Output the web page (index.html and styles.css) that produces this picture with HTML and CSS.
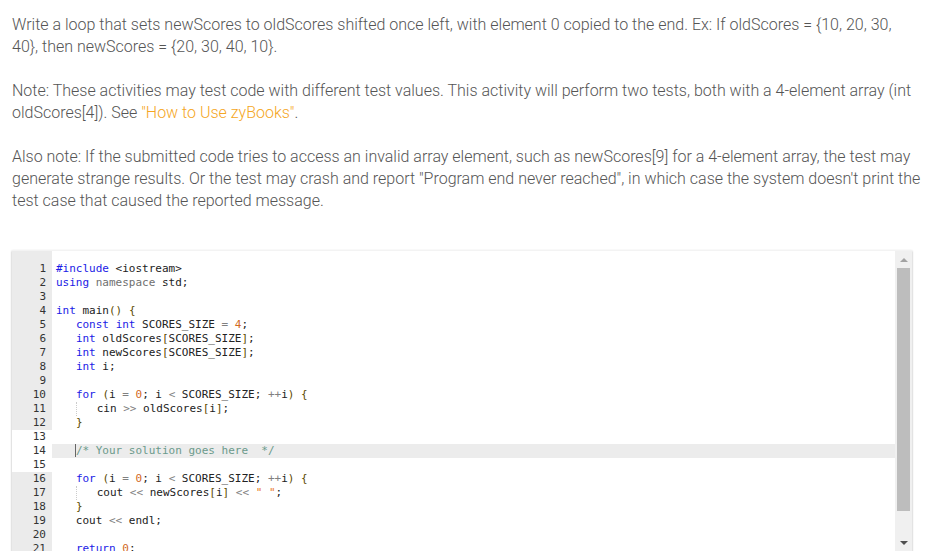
FILE: index.html
```html
<!DOCTYPE html>
<html>
<head>
<meta charset="utf-8">
<link rel="stylesheet" href="styles.css">
</head>
<body>
<div class="page">
  <div class="prose">
    <p class="lead">Write a loop that sets newScores to oldScores shifted once left, with element 0 copied to the end. Ex: If oldScores = {10, 20, 30, 40}, then newScores = {20, 30, 40, 10}.</p>
    <p>Note: These activities may test code with different test values. This activity will perform two tests, both with a 4-element array (int oldScores[4]). See <a class="link">"How to Use zyBooks"</a>.</p>
    <p>Also note: If the submitted code tries to access an invalid array element, such as newScores[9] for a 4-element array, the test may generate strange results. Or the test may crash and report "Program end never reached", in which case the system doesn't print the test case that caused the reported message.</p>
  </div>
  <div class="editor">
    <div class="scroller">
      <div class="lines">
        <div class="row"><span class="gut">1</span><span class="code"><span class="kw">#include</span> &lt;iostream&gt;</span></div>
        <div class="row"><span class="gut">2</span><span class="code"><span class="kw">using</span> <span class="ns">namespace</span> std;</span></div>
        <div class="row"><span class="gut">3</span><span class="code"></span></div>
        <div class="row"><span class="gut">4</span><span class="code"><span class="kw">int</span> main<span class="br">()</span> <span class="br">{</span></span></div>
        <div class="row"><span class="gut">5</span><span class="code">   <span class="kw">const</span> <span class="kw">int</span> SCORES_SIZE <span class="op">=</span> <span class="num">4</span>;</span></div>
        <div class="row"><span class="gut">6</span><span class="code">   <span class="kw">int</span> oldScores<span class="br">[</span>SCORES_SIZE<span class="br">]</span>;</span></div>
        <div class="row"><span class="gut">7</span><span class="code">   <span class="kw">int</span> newScores<span class="br">[</span>SCORES_SIZE<span class="br">]</span>;</span></div>
        <div class="row"><span class="gut">8</span><span class="code">   <span class="kw">int</span> i;</span></div>
        <div class="row"><span class="gut">9</span><span class="code"></span></div>
        <div class="row"><span class="gut">10</span><span class="code">   <span class="kw">for</span> <span class="br">(</span>i <span class="op">=</span> <span class="num">0</span>; i <span class="op">&lt;</span> SCORES_SIZE; <span class="op">++</span>i<span class="br">)</span> <span class="br">{</span></span></div>
        <div class="row"><span class="gut">11</span><span class="code">   <span class="guide"></span>   cin <span class="op">&gt;&gt;</span> oldScores<span class="br">[</span>i<span class="br">]</span>;</span></div>
        <div class="row"><span class="gut">12</span><span class="code">   <span class="br">}</span></span></div>
        <div class="row edit"><span class="gut">13</span><span class="code"></span></div>
        <div class="row edit active"><span class="gut">14</span><span class="code">   <span class="cursor"></span><span class="cm">/* Your solution goes here  */</span></span></div>
        <div class="row edit"><span class="gut">15</span><span class="code"></span></div>
        <div class="row"><span class="gut">16</span><span class="code">   <span class="kw">for</span> <span class="br">(</span>i <span class="op">=</span> <span class="num">0</span>; i <span class="op">&lt;</span> SCORES_SIZE; <span class="op">++</span>i<span class="br">)</span> <span class="br">{</span></span></div>
        <div class="row"><span class="gut">17</span><span class="code">   <span class="guide"></span>   cout <span class="op">&lt;&lt;</span> newScores<span class="br">[</span>i<span class="br">]</span> <span class="op">&lt;&lt;</span> <span class="str">" "</span>;</span></div>
        <div class="row"><span class="gut">18</span><span class="code">   <span class="br">}</span></span></div>
        <div class="row"><span class="gut">19</span><span class="code">   cout <span class="op">&lt;&lt;</span> endl;</span></div>
        <div class="row"><span class="gut">20</span><span class="code"></span></div>
        <div class="row"><span class="gut">21</span><span class="code">   <span class="kw">return</span> <span class="num">0</span>;</span></div>
        <div class="row"><span class="gut">22</span><span class="code"><span class="br">}</span></span></div>
      </div>
    </div>
    <div class="vbar">
      <div class="arrow up"></div>
      <div class="track"><div class="thumb"></div></div>
      <div class="arrow down"></div>
    </div>
  </div>
</div>
</body>
</html>
```

FILE: styles.css
```css
html, body {
  margin: 0;
  padding: 0;
  background: #fff;
}
.page {
  padding: 0 4px 0 12px;
}
.prose {
  font-family: Roboto, "Liberation Sans", sans-serif;
  font-weight: 300;
  font-size: 16px;
  line-height: 22px;
  color: #555;
  padding-top: 14px;
}
.prose p {
  margin: 0 0 22px 0;
}
.prose p.lead {
  padding-right: 12px;
}
.link {
  color: #f5a623;
  text-decoration: none;
}
.editor {
  margin: 38px 11px 0 0;
  height: 300px;
  display: flex;
  background: #fff;
  box-shadow: 0 1px 2px rgba(0,0,0,0.35);
  border-top: 1px solid #f3f3f3;
  overflow: hidden;
}
.scroller {
  flex: 1;
  overflow: hidden;
  background: linear-gradient(to right, #ebebeb 0 40px, #fff 40px);
  padding-top: 11px;
}
.row {
  display: flex;
  height: 14px;
  line-height: 14px;
  font-family: "DejaVu Sans Mono", monospace;
  font-size: 11px;
  color: #222;
  white-space: pre;
}
.row.edit .gut {
  background: #fff;
}
.gut {
  width: 34px;
  padding-right: 6px;
  text-align: right;
  color: #333;
  background: #ebebeb;
  flex: none;
}
.code {
  flex: 1;
  padding-left: 4px;
}
.row.active .code {
  background: #ececec;
}
.kw { color: #1a1ae6; }
.ns { color: #707070; }
.op { color: #808080; }
.num { color: #d2691e; }
.br { color: #5c4a00; }
.str { color: #e8781e; }
.cm { color: #6b9a8b; }
.guide {
  display: inline-block;
  width: 0;
  height: 14px;
  border-left: 1px dotted #ccc;
  vertical-align: top;
}
.cursor {
  display: inline-block;
  width: 0;
  height: 13px;
  border-left: 1px solid #666;
  vertical-align: top;
  margin-left: -1px;
}
.vbar {
  width: 17px;
  flex: none;
  background: #f0f0f0;
  display: flex;
  flex-direction: column;
}
.arrow {
  height: 17px;
  flex: none;
  display: flex;
  align-items: center;
  justify-content: center;
}
.arrow.up::before {
  content: "";
  border-left: 4px solid transparent;
  border-right: 4px solid transparent;
  border-bottom: 4px solid #a3a3a3;
}
.arrow.down::before {
  content: "";
  border-left: 4px solid transparent;
  border-right: 4px solid transparent;
  border-top: 4px solid #505050;
}
.track {
  flex: 1;
  padding: 0 2px;
}
.thumb {
  height: 243px;
  background: #bdbdbd;
}
```
